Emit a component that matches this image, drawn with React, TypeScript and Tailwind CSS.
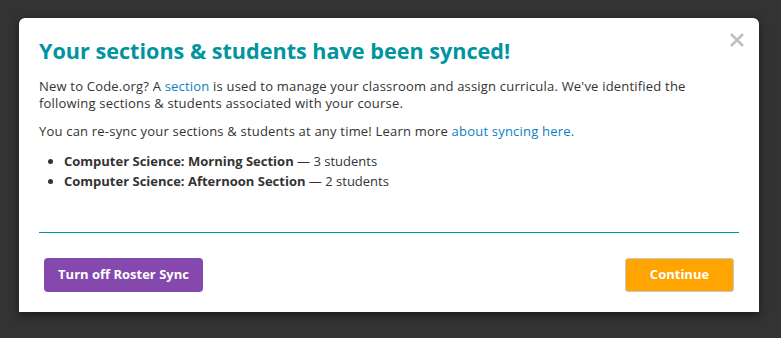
export default function App() {
  return (
    <div className="h-[338px] w-[781px] bg-[#333333] pl-[19px] pt-[18px] font-['Open_Sans',sans-serif]">
      <div className="relative flex h-[294px] w-[740px] flex-col rounded-t-[6px] bg-white shadow-[0_3px_10px_rgba(0,0,0,0.5)]">
        <button
          type="button"
          aria-label="Close"
          className="absolute right-[14px] top-[14px] text-[#c0c0c0]"
        >
          <svg width="16" height="16" viewBox="0 0 16 16">
            <path d="M2 2 L14 14 M14 2 L2 14" stroke="currentColor" strokeWidth="2.6" />
          </svg>
        </button>
        <div className="px-5 pt-[19px]">
          <h2 className="text-[21.6px] font-bold leading-[28px] text-[#0094a0]">
            Your sections &amp; students have been synced!
          </h2>
          <p className="mt-[13px] text-[13px] leading-[17px] tracking-[0.2px] text-[#333]">
            New to Code.org? A <a className="text-[#0b7fc4]">section</a> is used to manage your classroom and assign
            curricula. We've identified the following sections &amp; students associated with your course.
          </p>
          <p className="mt-[11px] text-[13px] leading-[17px] tracking-[0.2px] text-[#333]">
            You can re-sync your sections &amp; students at any time! Learn more{" "}
            <a className="text-[#0b7fc4]">about syncing here.</a>
          </p>
          <ul className="mt-[11px] list-disc pl-[25px] text-[13px] leading-[20px] text-[#333]">
            <li>
              <span className="font-bold">Computer Science: Morning Section</span> — 3 students
            </li>
            <li>
              <span className="font-bold">Computer Science: Afternoon Section</span> — 2 students
            </li>
          </ul>
        </div>
        <div className="mx-5 mt-auto border-t border-[#0094a0]" />
        <div className="flex items-center justify-between pl-[25px] pr-[25px] pb-[20px] pt-[25px]">
          <button
            type="button"
            className="h-[34px] w-[159px] rounded-[4px] bg-[#8549ad] text-[13px] font-bold text-white"
          >
            Turn off Roster Sync
          </button>
          <button
            type="button"
            className="h-[34px] w-[109px] rounded-[3px] border border-[#c8c8c8] bg-[#ffa400] text-[13px] font-bold text-white"
          >
            Continue
          </button>
        </div>
      </div>
    </div>
  );
}
